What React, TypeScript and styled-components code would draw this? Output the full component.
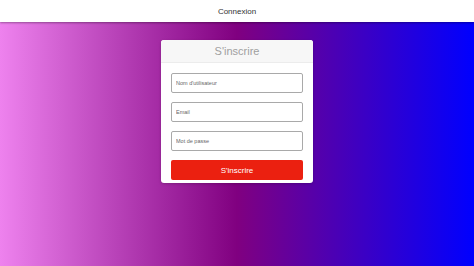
import styled, { createGlobalStyle } from "styled-components";

const GlobalStyle = createGlobalStyle`
  html, body {
    margin: 0;
    padding: 0;
    height: 100%;
  }
  body {
    font-family: "Liberation Sans", Arial, sans-serif;
  }
  #root {
    min-height: 100vh;
    display: flex;
    flex-direction: column;
  }
`;

const fields = ["Nom d'utilisateur", "Email", "Mot de passe"];

export default function App() {
  return (
    <>
      <GlobalStyle />
      <Header>
        <NavLink>Connexion</NavLink>
      </Header>
      <Main>
        <Card>
          <CardTitle>S'inscrire</CardTitle>
          <CardBody>
            {fields.map((f) => (
              <Input key={f} placeholder={f} />
            ))}
            <Submit>S'inscrire</Submit>
          </CardBody>
        </Card>
      </Main>
    </>
  );
}

const Header = styled.header`
  height: 22px;
  background: #fff;
  display: flex;
  align-items: center;
  justify-content: center;
  box-shadow: 0 1px 2px rgba(0, 0, 0, 0.35);
  position: relative;
  z-index: 1;
`;

const NavLink = styled.span`
  font-size: 8px;
  color: #333;
`;

const Main = styled.main`
  flex: 1;
  background: linear-gradient(to right, violet, purple, blue);
  display: flex;
  justify-content: center;
  align-items: flex-start;
  padding-top: 18px;
`;

const Card = styled.div`
  width: 152px;
  background: #fff;
  border-radius: 3px;
  overflow: hidden;
  box-shadow: 0 1px 3px rgba(0, 0, 0, 0.2);
`;

const CardTitle = styled.div`
  height: 23px;
  background: #f7f7f7;
  border-bottom: 1px solid #ececec;
  box-sizing: border-box;
  display: flex;
  align-items: center;
  justify-content: center;
  font-size: 11px;
  color: #a0a0a0;
`;

const CardBody = styled.div`
  padding: 10px 10px 3px;
  display: flex;
  flex-direction: column;
  gap: 9px;
`;

const Input = styled.input`
  height: 20px;
  box-sizing: border-box;
  border: 1px solid #a9a9a9;
  border-radius: 2px;
  padding: 0 4px;
  font-family: inherit;
  font-size: 5.5px;
  outline: none;
  &::placeholder {
    color: #666;
  }
`;

const Submit = styled.button`
  height: 20px;
  border: none;
  border-radius: 2px;
  background: #eb2010;
  color: #fff;
  font-family: inherit;
  font-size: 8px;
  font-weight: 400;
  padding: 0;
`;
